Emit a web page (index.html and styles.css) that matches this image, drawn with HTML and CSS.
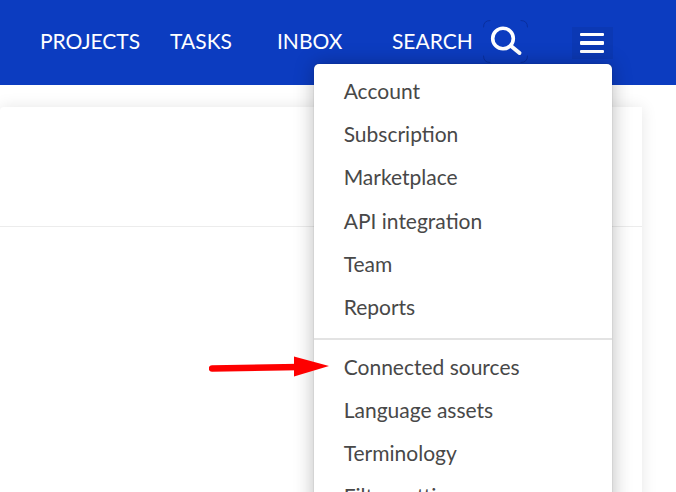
FILE: index.html
```html
<!DOCTYPE html>
<html lang="en">
<head>
<meta charset="utf-8">
<title>Menu</title>
<link rel="stylesheet" href="styles.css">
</head>
<body>
<div class="page">
  <header class="topbar">
    <nav class="nav">
      <a class="nav-link nav-projects">PROJECTS</a>
      <a class="nav-link nav-tasks">TASKS</a>
      <a class="nav-link nav-inbox">INBOX</a>
      <a class="nav-link nav-search">SEARCH</a>
    </nav>
    <span class="search-btn">
      <svg width="45" height="43" viewBox="0 0 45 43" fill="none" stroke-linecap="round">
        <path d="M.5 7 Q.5 .5 7 .5 M38 .5 Q44.500 .5 44.500 7 M44.500 36 Q44.500 42.500 38 42.500 M7 42.500 Q.5 42.500 .5 36" stroke="#0a2f9e" stroke-width="1"/>
        <circle cx="20" cy="18.500" r="10.300" stroke="#fff" stroke-width="3.600"/>
        <path d="M28 26 L36.500 33" stroke="#fff" stroke-width="4"/>
      </svg>
    </span>
    <span class="menu-btn">
      <span class="bar"></span>
      <span class="bar"></span>
      <span class="bar"></span>
    </span>
  </header>
  <main class="content">
    <section class="card">
      <div class="card-head"></div>
    </section>
  </main>
  <div class="dropdown">
    <ul class="menu-group">
      <li>Account</li>
      <li>Subscription</li>
      <li>Marketplace</li>
      <li>API integration</li>
      <li>Team</li>
      <li>Reports</li>
    </ul>
    <ul class="menu-group menu-second">
      <li>Connected sources</li>
      <li>Language assets</li>
      <li>Terminology</li>
      <li>Filter settings</li>
    </ul>
  </div>
  <svg class="arrow" width="124" height="24" viewBox="0 0 124 24">
    <path d="M3 13.500 L90 12" stroke="#fe0000" stroke-width="6.500" stroke-linecap="round" fill="none"/>
    <path d="M85 1.500 L120 11 L85 21.500 Z" fill="#fe0000"/>
  </svg>
</div>
</body>
</html>
```
FILE: styles.css
```css
* { box-sizing: border-box; }
html, body { margin: 0; padding: 0; }
body { font-family: Lato, "Open Sans", sans-serif; background: #fff; }
.page { position: relative; width: 676px; height: 492px; overflow: hidden; background: #fff; }

.topbar {
  height: 85px;
  background: #0c3cc0;
  display: flex;
  align-items: center;
  padding-left: 40px;
  color: #fff;
}
.nav { display: flex; align-items: center; margin-top: -4px; }
.nav-link { font-size: 21px; line-height: 26px; color: #fff; white-space: nowrap; }
.nav-tasks { margin-left: 30px; }
.nav-inbox { margin-left: 45px; }
.nav-search { margin-left: 49.6px; }

.search-btn {
  width: 45px;
  height: 43px;
  margin-left: 10px;
  margin-top: -2px;
  display: flex;
}
.menu-btn {
  width: 41px;
  height: 32px;
  margin-left: 44px;
  margin-top: 1px;
  display: flex;
  flex-direction: column;
  align-items: center;
  justify-content: center;
  gap: 5px;
  background: #0b38b4;
}
.bar { display: block; width: 24px; height: 3.5px; border-radius: 1px; background: #fff; }

.content { padding-top: 22px; }
.card {
  width: 642px;
  height: 400px;
  background: #fff;
  border-radius: 4px 0 0 0;
  box-shadow: 0 0 16px rgba(0, 0, 0, 0.1);
}
.card-head { height: 120px; border-bottom: 1px solid #ececec; }

.dropdown {
  position: absolute;
  left: 314px;
  top: 64px;
  width: 298px;
  height: 460px;
  background: #fff;
  border-radius: 5px;
  box-shadow: 0 0 20px rgba(0, 0, 0, 0.28), 0 0 1px rgba(0, 0, 0, 0.4);
}
.menu-group {
  list-style: none;
  margin: 0;
  padding: 5px 0 10px;
  border-bottom: 2px solid #e3e3e3;
}
.menu-group li {
  height: 43.2px;
  line-height: 43.2px;
  padding-left: 29.7px;
  font-size: 21px;
  color: #484848;
  white-space: nowrap;
}
.menu-second { padding-top: 4.6px; border-bottom: 0; }

.arrow { position: absolute; left: 209px; top: 355px; }
```
